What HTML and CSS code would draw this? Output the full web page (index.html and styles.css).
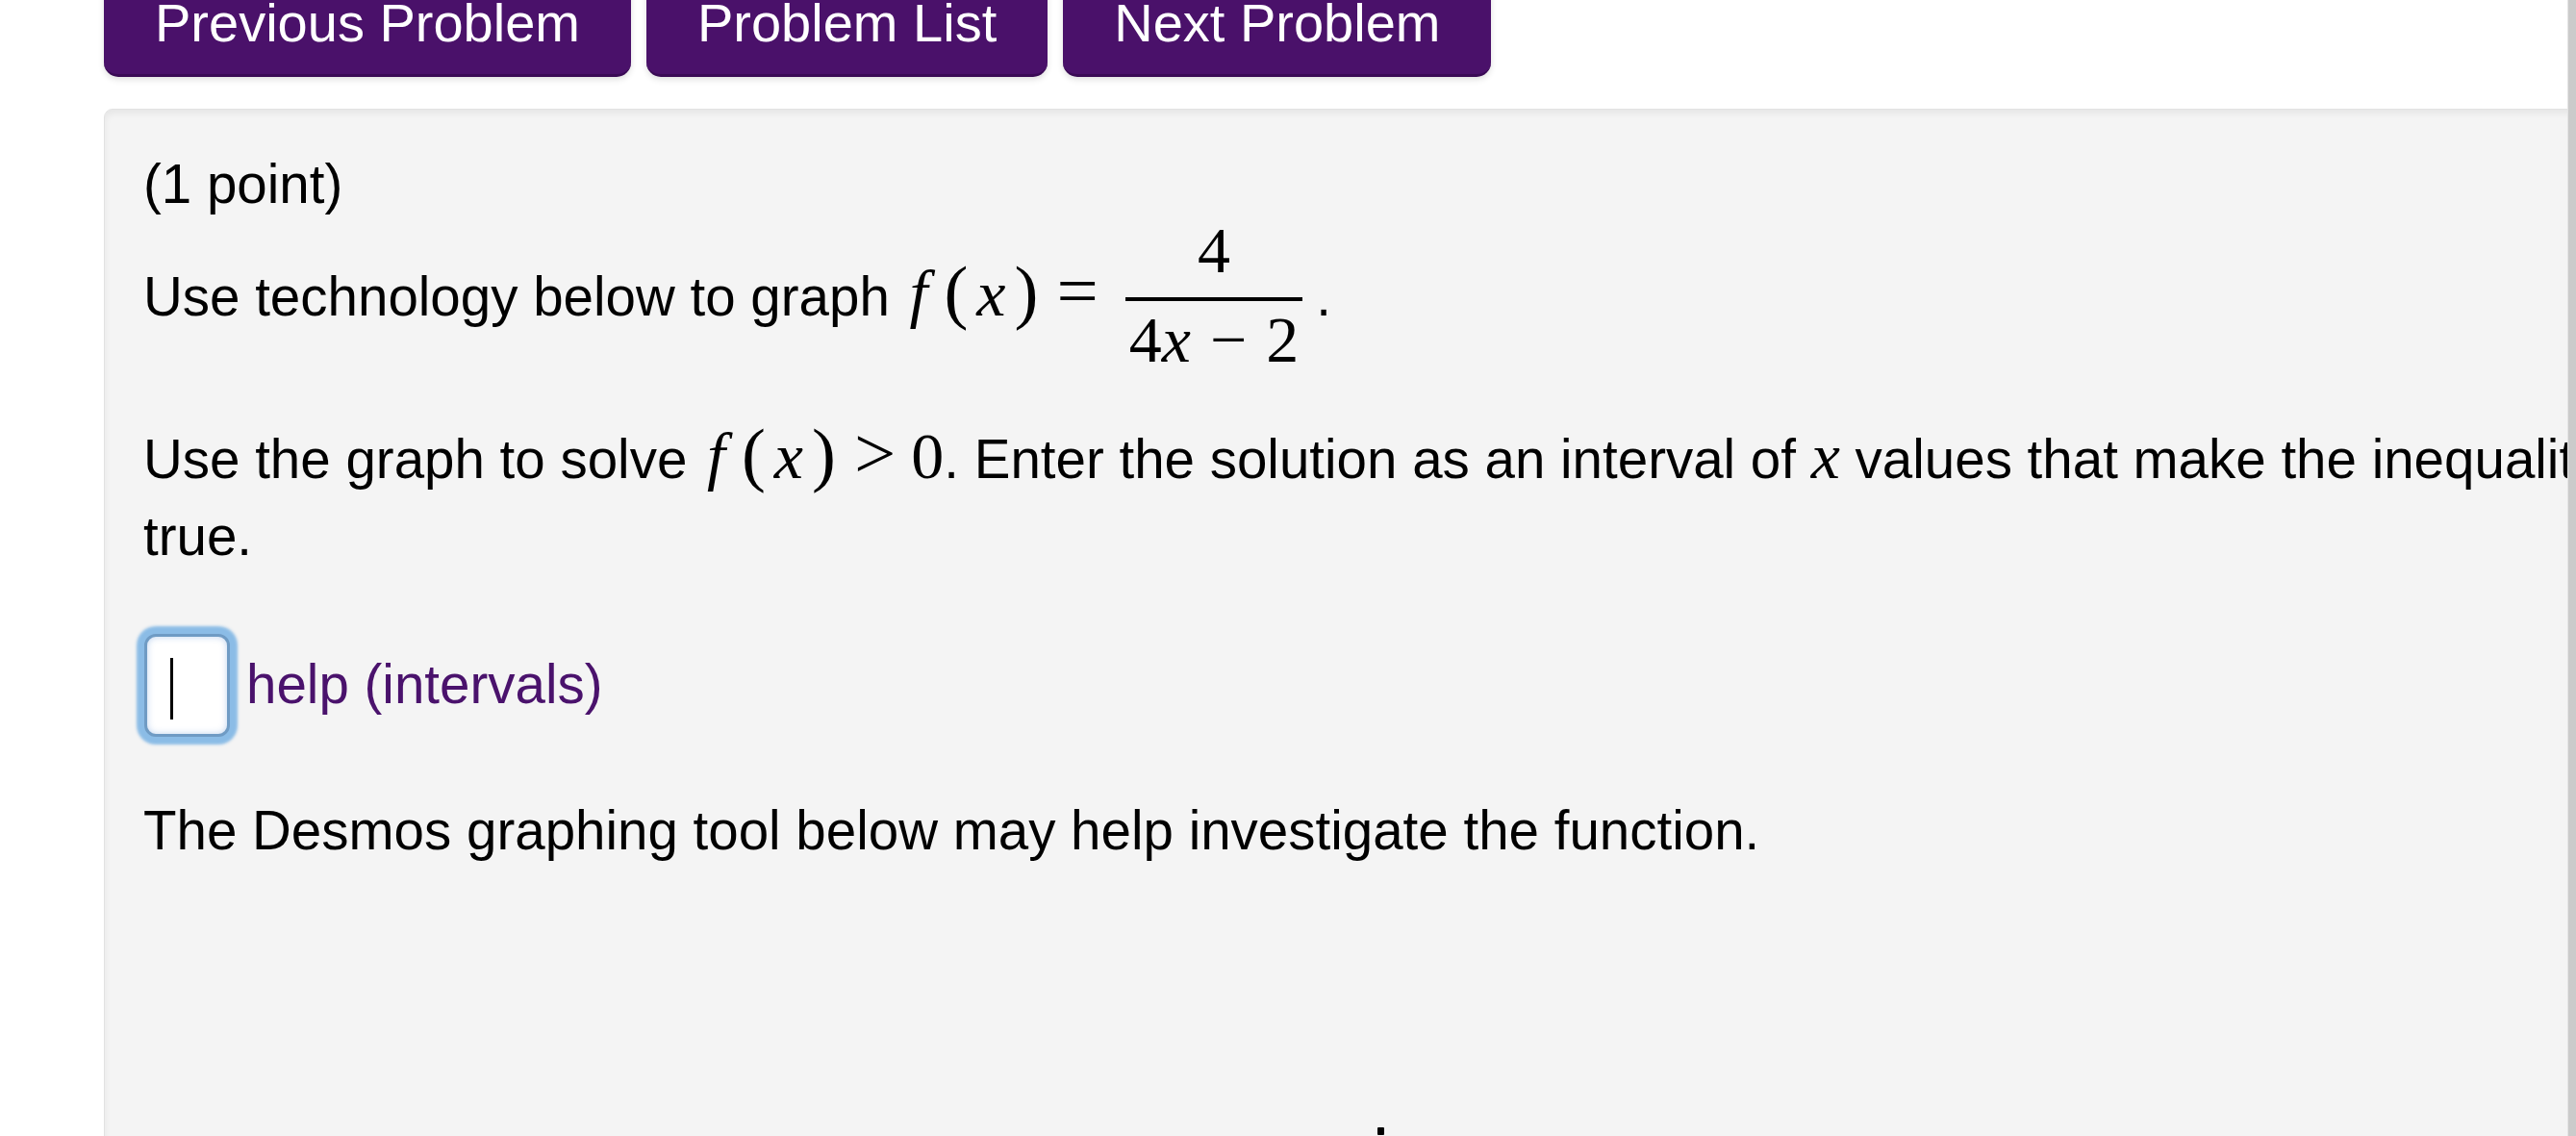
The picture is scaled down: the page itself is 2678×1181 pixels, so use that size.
FILE: index.html
```html
<!DOCTYPE html>
<html lang="en">
<head>
<meta charset="utf-8">
<title>Problem</title>
<link rel="stylesheet" href="styles.css">
</head>
<body>
<nav class="problem-nav">
  <a class="nav-btn" href="#">Previous Problem</a>
  <a class="nav-btn" href="#">Problem List</a>
  <a class="nav-btn" href="#">Next Problem</a>
</nav>
<main class="well">
  <p class="points">(1 point)</p>
  <p class="stmt frac-line">Use technology below to graph <span class="math"><i class="mi f">f</i><span class="mo">(</span><i class="mi xv">x</i><span class="mo">)</span><span class="rel">=</span><span class="frac"><span class="num">4</span><span class="den">4<i class="mi">x</i><span class="bin">−</span>2</span></span></span>.</p>
  <p class="stmt gap">Use the graph to solve <span class="math"><i class="mi f">f</i><span class="mo">(</span><i class="mi xv">x</i><span class="mo">)</span><span class="rel">&gt;</span>0</span>. Enter the solution as an interval of <span class="math"><i class="mi">x</i></span> values that make the inequality true.</p>
  <div class="answer-row gap">
    <span class="answer-input"><span class="caret"></span></span>
    <a class="help-link" href="#">help (intervals)</a>
  </div>
  <p class="stmt desmos-note">The Desmos graphing tool below may help investigate the function.</p>
  <div class="desmos-area"><span class="desmos-dot"></span></div>
</main>
<div class="scroll-edge"></div>
</body>
</html>
```
FILE: styles.css
```css
html, body {
  margin: 0;
  padding: 0;
  overflow: hidden;
  background: #ffffff;
}

body {
  font-family: "Liberation Sans", Arial, Helvetica, sans-serif;
  font-size: 56.5px;
  line-height: 80.5px;
  color: #000;
  width: 2900px;
}

.problem-nav {
  display: flex;
  gap: 16px;
  margin: -18px 0 0 108px;
}

.nav-btn {
  display: block;
  background: #4a116a;
  color: #fff;
  text-decoration: none;
  font-size: 56px;
  line-height: 64px;
  padding: 10px 53px 21px;
  border-bottom: 3px solid #3a0a55;
  border-radius: 0 0 15px 15px;
  box-shadow: 0 3px 6px rgba(0, 0, 0, 0.12);
}

.well {
  display: block;
  box-sizing: border-box;
  width: 2694px;
  margin: 33px 0 0 108px;
  padding: 38px 40px 0;
  background: #f4f4f4;
  border: 1px solid #e2e2e2;
  border-radius: 9px 9px 0 0;
  box-shadow: inset 0 4px 7px rgba(0, 0, 0, 0.06);
  height: 1100px;
}

.well p {
  margin: 0;
}

.frac-line {
  margin-top: 2px !important;
}

.gap {
  margin-top: 60px !important;
}

.math {
  font-family: "Liberation Serif", "Times New Roman", serif;
  font-size: 68px;
  line-height: 1;
}

.mi {
  font-style: italic;
}

.mi.f {
  margin-right: 14px;
  margin-left: 5px;
}

.mi.xv {
  margin: 0 6px;
}

.mo {
  font-style: normal;
  font-size: 1.1em;
  line-height: 50px;
  margin: 0 3px;
}

.rel {
  font-size: 1.13em;
  line-height: 50px;
  margin: 0 16px;
}

.bin {
  margin: 0 20px;
}

.frac {
  display: inline-block;
  vertical-align: -48px;
  text-align: center;
  margin: 0 14px 0 12px;
}

.num,
.den {
  display: block;
  line-height: 50px;
  padding: 0 4px;
}

.num {
  padding-bottom: 24px;
}

.den {
  border-top: 4px solid #000;
  padding-top: 15px;
}

.answer-row {
  display: flex;
  align-items: center;
}

.answer-input {
  display: block;
  box-sizing: border-box;
  width: 89px;
  height: 107px;
  margin-left: 1px;
  position: relative;
  background: #fff;
  border: 3px solid #6f9bc4;
  border-radius: 12px;
  box-shadow: 0 0 3px 8px rgba(128, 182, 228, 0.9), inset 0 0 7px rgba(70, 130, 210, 0.35);
}

.caret {
  position: absolute;
  left: 24px;
  top: 22px;
  width: 3px;
  height: 64px;
  background: #000;
}

.help-link {
  color: #4a126c;
  text-decoration: none;
  margin-left: 17px;
}

.desmos-note {
  margin-top: 58px !important;
}

.desmos-area {
  padding-top: 268px;
}

.desmos-dot {
  display: block;
  width: 7px;
  height: 8px;
  margin-left: 1283px;
  background: #000;
  border-radius: 1px;
}

.scroll-edge {
  position: fixed;
  top: 0;
  right: 0;
  bottom: 0;
  width: 8px;
  background: #cbcbcb;
  border-left: 1px solid #e4e4e4;
}
```
